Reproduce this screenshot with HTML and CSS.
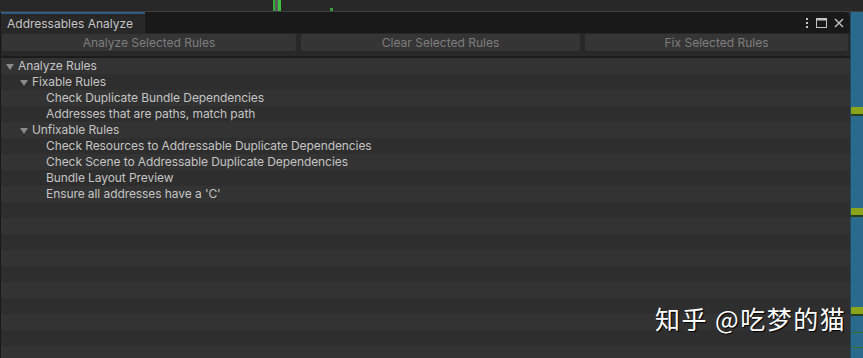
FILE: index.html
```html
<!DOCTYPE html>
<html lang="en">
<head>
    <meta charset="UTF-8">
    <title>Addressables Analyze</title>
    <link rel="stylesheet" href="styles.css">
</head>
<body>
    <div class="backdrop">
        <div class="scene-strip">
            <span class="green-bar"></span>
            <span class="green-dot"></span>
        </div>
        <div class="stage">
            <div class="window">
                <div class="tabbar">
                    <div class="tab">Addressables Analyze</div>
                    <div class="tab-icons">
                        <svg width="4" height="10" viewBox="0 0 4 10"><rect x="1" y="0" width="2" height="2" fill="#c4c4c4"/><rect x="1" y="4" width="2" height="2" fill="#c4c4c4"/><rect x="1" y="8" width="2" height="2" fill="#c4c4c4"/></svg>
                        <svg width="11" height="10" viewBox="0 0 11 10"><rect x="0.5" y="0.5" width="10" height="9" fill="none" stroke="#c4c4c4"/><rect x="0.5" y="0.5" width="10" height="2" fill="#c4c4c4"/></svg>
                        <svg width="10" height="10" viewBox="0 0 10 10"><path d="M1 1 L9 9 M9 1 L1 9" stroke="#c4c4c4" stroke-width="1.4"/></svg>
                    </div>
                </div>
                <div class="toolbar">
                    <button class="tool-btn btn-analyze">Analyze Selected Rules</button>
                    <button class="tool-btn btn-clear">Clear Selected Rules</button>
                    <button class="tool-btn btn-fix">Fix Selected Rules</button>
                </div>
                <div class="tree">
                    <div class="row"><span class="arrow"></span>Analyze Rules</div>
                    <div class="row depth1"><span class="arrow"></span>Fixable Rules</div>
                    <div class="row depth2">Check Duplicate Bundle Dependencies</div>
                    <div class="row depth2">Addresses that are paths, match path</div>
                    <div class="row depth1"><span class="arrow"></span>Unfixable Rules</div>
                    <div class="row depth2">Check Resources to Addressable Duplicate Dependencies</div>
                    <div class="row depth2">Check Scene to Addressable Duplicate Dependencies</div>
                    <div class="row depth2">Bundle Layout Preview</div>
                    <div class="row depth2">Ensure all addresses have a 'C'</div>
                    <div class="row"></div>
                    <div class="row"></div>
                    <div class="row"></div>
                    <div class="row"></div>
                    <div class="row"></div>
                    <div class="row"></div>
                    <div class="row"></div>
                    <div class="row"></div>
                    <div class="row"></div>
                    <div class="row"></div>
                </div>
            </div>
            <div class="side">
                <span class="side-mark mark1"></span>
                <span class="side-mark mark2"></span>
                <span class="side-mark mark3"></span>
                <span class="side-line line1"></span>
                <span class="side-line line2"></span>
            </div>
        </div>
    </div>
    <div class="watermark">知乎 @吃梦的猫</div>
</body>
</html>
```

FILE: styles.css
```css
body {
    margin: 0;
    padding: 0;
    width: 863px;
    height: 358px;
    overflow: hidden;
    background-color: #282828;
    font-family: Inter, "Liberation Sans", sans-serif;
    font-size: 12px;
    color: #c4c4c4;
    position: relative;
}

.backdrop {
    display: flex;
    flex-direction: column;
    height: 358px;
}

.scene-strip {
    flex-shrink: 0;
    height: 11px;
    border-bottom: 1px solid #3e3e3e;
    position: relative;
}

.green-bar {
    position: absolute;
    left: 273px;
    top: 0;
    width: 8px;
    height: 11px;
    background: linear-gradient(to right, #2fae2f 0, #2fae2f 2px, #5c5c5c 2px, #5c5c5c 5px, #3fc03f 5px);
}

.green-dot {
    position: absolute;
    left: 330px;
    top: 8px;
    width: 3px;
    height: 3px;
    background-color: #3a9c3a;
}

.stage {
    flex: 1;
    min-height: 0;
    display: flex;
}

.window {
    width: 850px;
    display: flex;
    flex-direction: column;
    background-color: #282828;
    border-left: 1px solid #191919;
    box-sizing: border-box;
}

.tabbar {
    flex-shrink: 0;
    height: 21px;
    background-color: #191919;
    display: flex;
    justify-content: space-between;
    align-items: stretch;
    border-top-right-radius: 6px;
}

.tab {
    width: 144px;
    background-color: #282828;
    border-top: 2px solid #2f5a82;
    box-sizing: border-box;
    padding-left: 6px;
    line-height: 20px;
    color: #c4c4c4;
}

.tab-icons {
    display: flex;
    align-items: center;
    gap: 7px;
    padding-right: 6px;
}

.toolbar {
    flex-shrink: 0;
    display: flex;
    gap: 5px;
    padding: 1px 2px 5px 1px;
    border-bottom: 2px solid #1c1c1c;
}

.tool-btn {
    height: 17px;
    padding: 0;
    border: none;
    border-radius: 2px;
    background-color: #353535;
    color: #7e7e7e;
    font-family: Inter, "Liberation Sans", sans-serif;
    font-size: 12px;
    line-height: 17px;
}

.btn-analyze {
    width: 294px;
}

.btn-clear {
    width: 279px;
}

.btn-fix {
    flex: 1;
}

.tree {
    flex: 1;
    min-height: 0;
    overflow: hidden;
}

.row {
    height: 16px;
    line-height: 16px;
    padding-left: 17px;
    background-color: #333333;
    white-space: nowrap;
    position: relative;
    letter-spacing: -0.08px;
}

.row:nth-child(even) {
    background-color: #2e2e2e;
}

.depth1 {
    padding-left: 31px;
}

.depth2 {
    padding-left: 45px;
}

.arrow {
    position: absolute;
    top: 6px;
    margin-left: -12px;
    width: 0;
    height: 0;
    border-left: 4px solid transparent;
    border-right: 4px solid transparent;
    border-top: 6px solid #8a8a8a;
}

.side {
    flex: 1;
    background-color: #2a6a8c;
    border-left: 1px solid #1e4a63;
    position: relative;
}

.side-mark {
    position: absolute;
    left: 0;
    right: 0;
    height: 7px;
    background-color: #8aa51c;
    border-bottom: 2px solid #243d1c;
}

.mark1 {
    top: 95px;
}

.mark2 {
    top: 196px;
}

.mark3 {
    top: 295px;
}

.side-line {
    position: absolute;
    left: 0;
    right: 0;
    height: 1px;
    background-color: #3d6b2a;
}

.line1 {
    top: 320px;
}

.line2 {
    top: 335px;
}

.watermark {
    position: absolute;
    left: 655px;
    top: 300px;
    font-family: "Noto Sans CJK SC", sans-serif;
    font-size: 25px;
    color: #ffffff;
    text-shadow: 1px 1px 1px #000000;
    letter-spacing: 1.5px;
}
```
